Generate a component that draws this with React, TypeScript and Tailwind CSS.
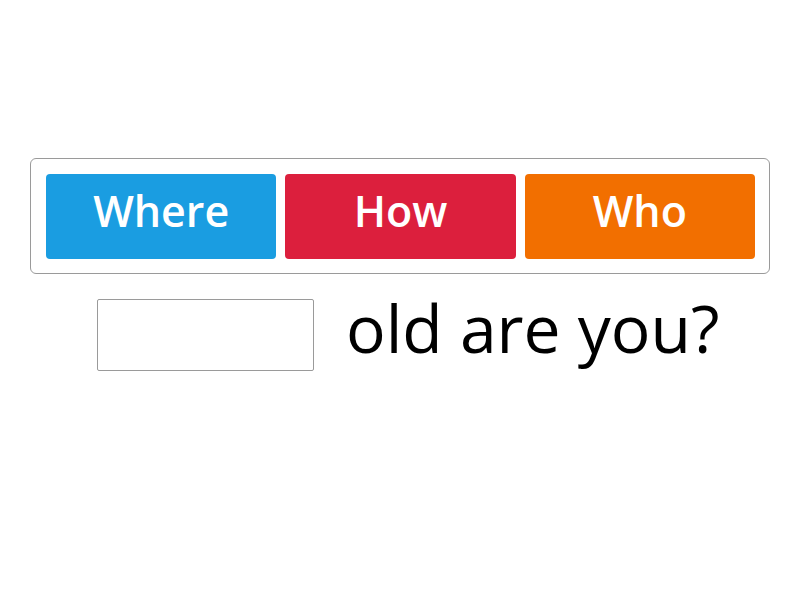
const words = [
  { label: 'Where', bg: 'bg-[#1a9de1]' },
  { label: 'How', bg: 'bg-[#dc1f3d]' },
  { label: 'Who', bg: 'bg-[#f26f00]' },
];

export default function App() {
  return (
    <div className="w-[800px] h-[600px] bg-white font-['Open_Sans',sans-serif]">
      <div className="pt-[158px] px-[30px]">
        <div className="flex gap-[9px] rounded-[6px] border border-[#9a9a9a] pt-[15px] pb-[14px] pl-[15px] pr-[14px]">
          {words.map((w) => (
            <div
              key={w.label}
              className={`${w.bg} flex h-[85px] flex-1 items-center justify-center rounded-[4px] pb-[10px] text-[43px] font-semibold text-white`}
            >
              {w.label}
            </div>
          ))}
        </div>
      </div>
      <div className="mt-[25px] flex items-start pl-[97px]">
        <div className="h-[72px] w-[217px] rounded-[2px] border border-[#9a9a9a]" />
        <div className="ml-[32px] text-[66px] leading-[57px] text-black">old are you?</div>
      </div>
    </div>
  );
}
